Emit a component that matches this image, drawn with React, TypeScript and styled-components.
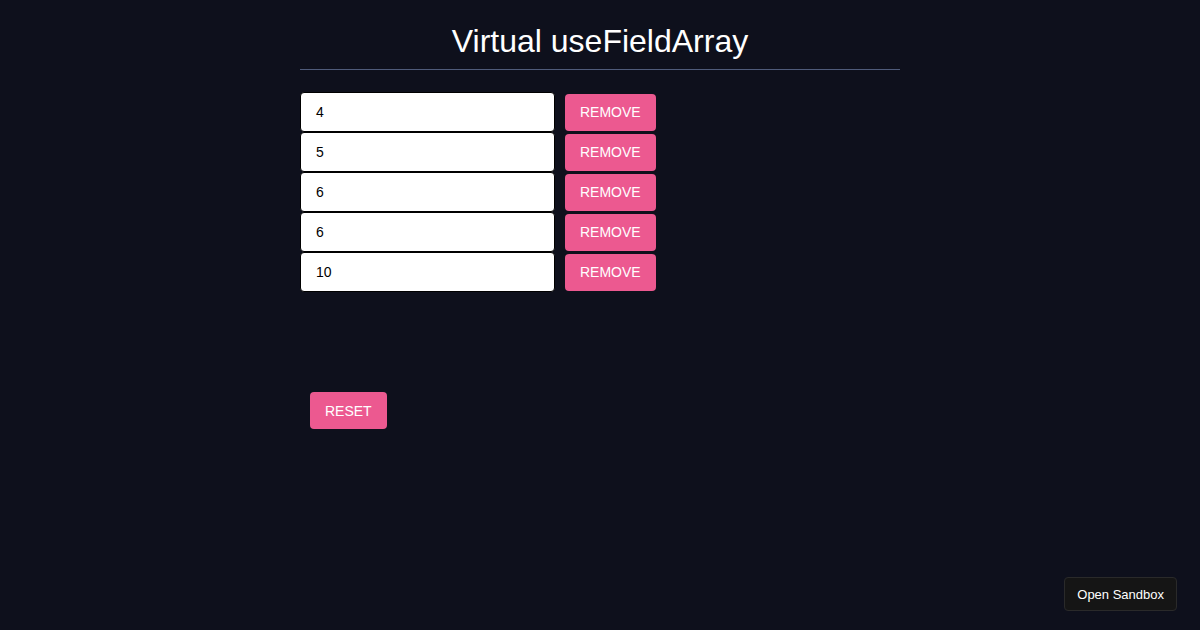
import React from "react";
import styled, { createGlobalStyle } from "styled-components";

const Global = createGlobalStyle`
  html, body { margin: 0; background: #0e101c; font-family: "Liberation Sans", Arial, sans-serif; }
`;
const Page = styled.div`width: 600px; margin: 0 auto; padding-top: 22px;`;
const Title = styled.h1`
  margin: 0; font-weight: 400; font-size: 32px; line-height: 38px; color: #fff; text-align: center;
  padding-bottom: 9px; border-bottom: 1px solid #4f5b7a;
`;
const List = styled.div`margin-top: 22px; height: 300px; display: flex; flex-direction: column;`;
const Row = styled.div`display: flex; align-items: center; gap: 10px; height: 40px;`;
const Input = styled.div`
  box-sizing: border-box; width: 255px; height: 40px; background: #fff; border: 1px solid #000;
  border-radius: 4px; padding: 0 15px; display: flex; align-items: center; font-size: 14px; color: #000;
`;
const Btn = styled.button<{ $ml?: number }>`
  background: #ec5990; color: #fff; border: none; border-radius: 4px; height: 37px; padding: 0 15px;
  font-family: "Liberation Sans", Arial, sans-serif; font-size: 14px; margin-left: ${p => p.$ml || 0}px;
`;
const Sandbox = styled.button`
  position: fixed; right: 23px; bottom: 19px; height: 34px; padding: 0 12px; background: #151515;
  color: #fff; border: 1px solid #2a2a2a; border-radius: 4px; font-family: "Liberation Sans", Arial, sans-serif; font-size: 13px;
`;

export default function App() {
  return (
    <>
      <Global />
      <Page>
        <Title>Virtual useFieldArray</Title>
        <List>
          {["4", "5", "6", "6", "10"].map((v, i) => (
            <Row key={i}><Input>{v}</Input><Btn>REMOVE</Btn></Row>
          ))}
        </List>
        <Btn $ml={10}>RESET</Btn>
      </Page>
      <Sandbox>Open Sandbox</Sandbox>
    </>
  );
}
